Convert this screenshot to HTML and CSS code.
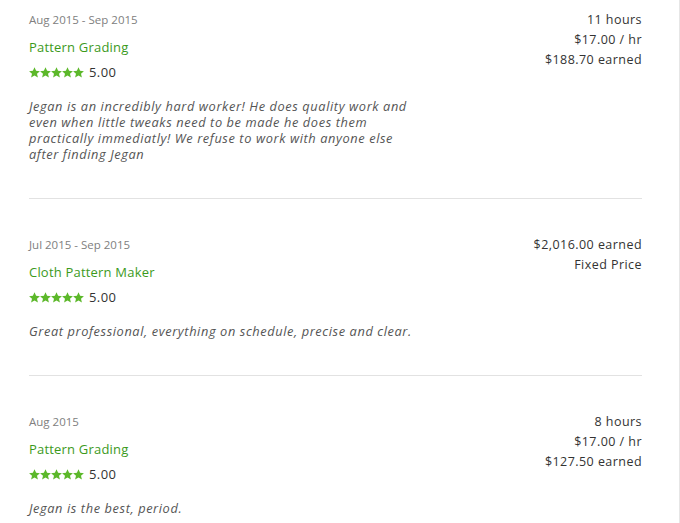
FILE: index.html
```html
<!DOCTYPE html>
<html>
<head>
<meta charset="utf-8">
<link rel="stylesheet" href="styles.css">
</head>
<body>
<div class="page">
  <div class="list">
    <div class="item first">
      <div class="row">
        <div class="left">
          <div class="date">Aug 2015 - Sep 2015</div>
          <div class="title">Pattern Grading</div>
          <div class="rating">
            <span class="stars">
              <svg viewBox="0 0 55 11" width="55" height="11"><g fill="#5cb82a"><path id="s" d="M5.5 0.3l1.6 3.5 3.8.4-2.9 2.5.9 3.8-3.4-2-3.4 2 .9-3.8L.1 4.2l3.8-.4z"/><use href="#s" x="11"/><use href="#s" x="22"/><use href="#s" x="33"/><use href="#s" x="44"/></g></svg>
            </span>
            <span class="score">5.00</span>
          </div>
        </div>
        <div class="right">
          <div>11 hours</div>
          <div>$17.00 / hr</div>
          <div>$188.70 earned</div>
        </div>
      </div>
      <p class="comment">Jegan is an incredibly hard worker! He does quality work and<br>even when little tweaks need to be made he does them<br>practically immediatly! We refuse to work with anyone else<br>after finding Jegan</p>
    </div>
    <div class="item">
      <div class="row">
        <div class="left">
          <div class="date">Jul 2015 - Sep 2015</div>
          <div class="title">Cloth Pattern Maker</div>
          <div class="rating">
            <span class="stars">
              <svg viewBox="0 0 55 11" width="55" height="11"><g fill="#5cb82a"><path id="s2" d="M5.5 0.3l1.6 3.5 3.8.4-2.9 2.5.9 3.8-3.4-2-3.4 2 .9-3.8L.1 4.2l3.8-.4z"/><use href="#s2" x="11"/><use href="#s2" x="22"/><use href="#s2" x="33"/><use href="#s2" x="44"/></g></svg>
            </span>
            <span class="score">5.00</span>
          </div>
        </div>
        <div class="right">
          <div>$2,016.00 earned</div>
          <div>Fixed Price</div>
        </div>
      </div>
      <p class="comment">Great professional, everything on schedule, precise and clear.</p>
    </div>
    <div class="item">
      <div class="row">
        <div class="left">
          <div class="date">Aug 2015</div>
          <div class="title">Pattern Grading</div>
          <div class="rating">
            <span class="stars">
              <svg viewBox="0 0 55 11" width="55" height="11"><g fill="#5cb82a"><path id="s3" d="M5.5 0.3l1.6 3.5 3.8.4-2.9 2.5.9 3.8-3.4-2-3.4 2 .9-3.8L.1 4.2l3.8-.4z"/><use href="#s3" x="11"/><use href="#s3" x="22"/><use href="#s3" x="33"/><use href="#s3" x="44"/></g></svg>
            </span>
            <span class="score">5.00</span>
          </div>
        </div>
        <div class="right">
          <div>8 hours</div>
          <div>$17.00 / hr</div>
          <div>$127.50 earned</div>
        </div>
      </div>
      <p class="comment">Jegan is the best, period.</p>
    </div>
  </div>
</div>
</body>
</html>
```

FILE: styles.css
```css
html, body {
  margin: 0;
  padding: 0;
  background: #fff;
}
body {
  font-family: "Open Sans", "Liberation Sans", sans-serif;
  color: #333;
  font-size: 13px;
}
.page {
  width: 679px;
  height: 523px;
  border-right: 1px solid #e6e6e6;
  overflow: hidden;
}
.list {
  margin-left: 29px;
  width: 613px;
}
.item {
  padding: 36px 0 36px;
  border-bottom: 1px solid #e2e2e2;
}
.item.first {
  padding-top: 10px;
}
.row {
  display: flex;
  justify-content: space-between;
}
.date {
  font-size: 11.5px;
  line-height: 20px;
  color: #808080;
}
.title {
  margin-top: 7px;
  font-size: 13px;
  line-height: 20px;
  color: #3c9a1c;
  letter-spacing: 0.2px;
}
.rating {
  margin-top: 5px;
  height: 20px;
  display: flex;
  align-items: center;
  gap: 5px;
}
.stars {
  display: flex;
}
.stars svg {
  display: block;
}
.score {
  font-size: 13px;
  color: #333;
  letter-spacing: 0.4px;
}
.right {
  text-align: right;
  font-size: 12.5px;
  line-height: 20px;
  color: #333;
  letter-spacing: 0.45px;
}
.comment {
  margin: 16px 0 0;
  font-style: italic;
  font-size: 12.8px;
  line-height: 16px;
  color: #555;
  letter-spacing: 0.6px;
}
```
